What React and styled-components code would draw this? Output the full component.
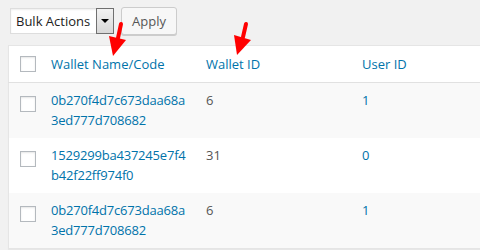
import styled, { createGlobalStyle } from "styled-components";

const GlobalStyle = createGlobalStyle`
  html, body {
    margin: 0;
    padding: 0;
    background: #f1f1f1;
    overflow: hidden;
  }
  body {
    font-family: "Open Sans", "Liberation Sans", sans-serif;
    font-size: 13px;
    color: #444;
  }
`;

const rows = [
  { code: "0b270f4d7c673daa68a3ed777d708682", walletId: "6", userId: "1" },
  { code: "1529299ba437245e7f4b42f22ff974f0", walletId: "31", userId: "0" },
  { code: "0b270f4d7c673daa68a3ed777d708682", walletId: "6", userId: "1" },
];

const Page = styled.div`
  position: relative;
  width: 480px;
  height: 250px;
  padding-left: 8px;
`;

const TableNav = styled.div`
  display: flex;
  align-items: center;
  gap: 7px;
  height: 45px;
  padding-left: 2px;
  box-sizing: border-box;
  padding-bottom: 3px;
`;

const Select = styled.div`
  display: flex;
  align-items: stretch;
  width: 104px;
  height: 26px;
  background: #fff;
  border: 1px solid #ddd;
  box-sizing: border-box;
  box-shadow: inset 0 1px 2px rgba(0, 0, 0, 0.07);
`;

const SelectLabel = styled.span`
  flex: 1;
  padding-left: 5px;
  line-height: 24px;
  font-size: 13px;
  color: #222;
  white-space: nowrap;
`;

const SelectArrow = styled.span`
  width: 16px;
  display: flex;
  align-items: center;
  justify-content: center;
  border: 1px solid #707070;
  margin: -1px -1px -1px 0;
  background: linear-gradient(#f2f2f2, #d8d8d8);

  &::after {
    content: "";
    border-left: 4px solid transparent;
    border-right: 4px solid transparent;
    border-top: 4px solid #000;
  }
`;

const Button = styled.button`
  height: 28px;
  padding: 0 10px;
  font-family: inherit;
  font-size: 13px;
  color: #555;
  background: #f7f7f7;
  border: 1px solid #ccc;
  border-radius: 3px;
  box-shadow: 0 1px 0 #ccc;
  margin-bottom: 1px;
`;

const Table = styled.table`
  width: 560px;
  border-collapse: collapse;
  border-spacing: 0;
  background: #fff;
  border: 1px solid #e5e5e5;
  box-shadow: 0 1px 1px rgba(0, 0, 0, 0.04);
  table-layout: fixed;
`;

const Head = styled.th`
  text-align: left;
  font-weight: 400;
  padding: 8px 10px;
  line-height: 20px;
  height: 20px;
  width: ${(p) => p.$width || "auto"};
  color: #0073aa;
  border-bottom: 1px solid #e1e1e1;
`;

const Row = styled.tr`
  background: ${(p) => (p.$alt ? "#f9f9f9" : "#fff")};
`;

const CheckCell = styled.td`
  width: 21px;
  padding: ${(p) => (p.$head ? "10px" : "13px")} 0 0 11px;
  vertical-align: top;
  border-bottom: ${(p) => (p.$head ? "1px solid #e1e1e1" : "none")};
`;

const Cell = styled.td`
  padding: 8px 10px;
  line-height: 19.5px;
  vertical-align: top;
  color: ${(p) => (p.$link ? "#0073aa" : "#555")};
  letter-spacing: ${(p) => (p.$code ? "-0.2px" : "normal")};
  word-break: break-all;
`;

const Checkbox = styled.span`
  display: block;
  width: 16px;
  height: 16px;
  box-sizing: border-box;
  border: 1px solid #b4b9be;
  background: #fff;
  box-shadow: inset 0 1px 2px rgba(0, 0, 0, 0.1);
`;

const Annotations = styled.svg`
  position: absolute;
  left: 0;
  top: 0;
  pointer-events: none;
`;

const Arrow = ({ x1, y1, x2, y2, head }) => (
  <g fill="#ff0000" stroke="#ff0000">
    <line x1={x1} y1={y1} x2={x2} y2={y2} strokeWidth="4" strokeLinecap="round" />
    <polygon points={head} stroke="none" />
  </g>
);

export default function App() {
  return (
    <>
      <GlobalStyle />
      <Page>
        <TableNav>
          <Select>
            <SelectLabel>Bulk Actions</SelectLabel>
            <SelectArrow />
          </Select>
          <Button>Apply</Button>
        </TableNav>
        <Table>
          <thead>
            <tr>
              <CheckCell as="th" $head>
                <Checkbox />
              </CheckCell>
              <Head $width="135px">Wallet Name/Code</Head>
              <Head $width="136px">Wallet ID</Head>
              <Head>User ID</Head>
            </tr>
          </thead>
          <tbody>
            {rows.map((row, i) => (
              <Row key={i} $alt={i % 2 === 0}>
                <CheckCell>
                  <Checkbox />
                </CheckCell>
                <Cell $link $code>
                  {row.code}
                </Cell>
                <Cell>{row.walletId}</Cell>
                <Cell $link>{row.userId}</Cell>
              </Row>
            ))}
          </tbody>
        </Table>
        <Annotations width="480" height="250">
          <Arrow x1={121} y1={24} x2={118} y2={38} head="109,36 126,40 113,56" />
          <Arrow x1={246} y1={24} x2={243} y2={37} head="234,35 251,40 237,55" />
        </Annotations>
      </Page>
    </>
  );
}
